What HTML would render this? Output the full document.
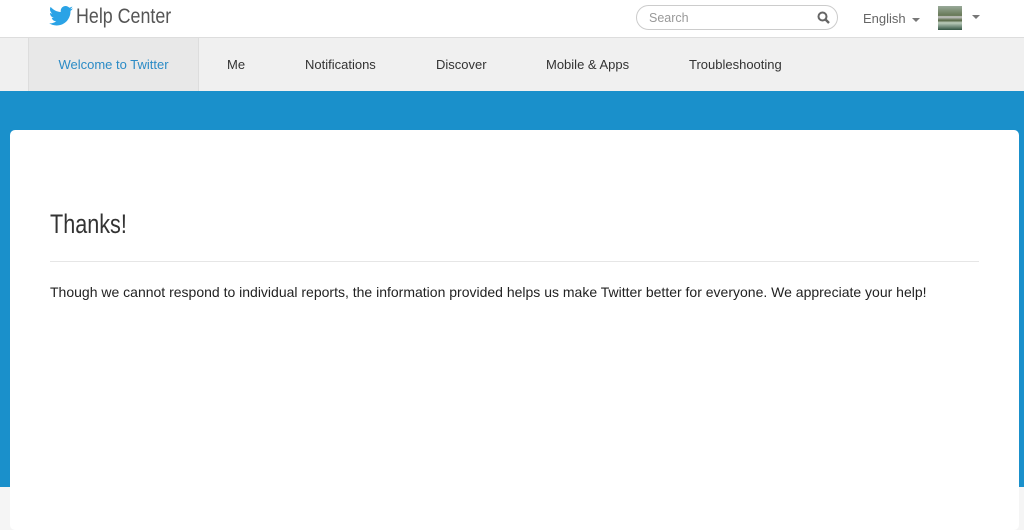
<!DOCTYPE html>
<html><head><meta charset="utf-8"><style>
*{margin:0;padding:0;box-sizing:border-box}
body{width:1024px;height:521px;overflow:hidden;background:#f5f5f5;font-family:"Liberation Sans",sans-serif;position:relative}
.hdr{position:absolute;left:0;top:0;width:1024px;height:38px;background:#fff;border-bottom:1px solid #ddd}
.logo{position:absolute;left:49px;top:6px}
.title{position:absolute;left:76px;top:5px;font-size:21px;color:#555;transform:scaleX(0.85);transform-origin:left}
.search{position:absolute;left:636px;top:5px;width:202px;height:25px;border:1px solid #ccc;border-radius:13px;background:#fff}
.search span{position:absolute;left:12px;top:5px;font-size:12.5px;color:#999}
.search svg{position:absolute;right:7px;top:5px}
.lang{position:absolute;left:863px;top:11px;font-size:13px;color:#666}
.caret{display:inline-block;border-left:4px solid transparent;border-right:4px solid transparent;border-top:4px solid #777;vertical-align:middle;margin-left:6px}
.av{position:absolute;left:938px;top:6px;width:24px;height:24px;background:linear-gradient(#9a9 0,#675 40%,#ccc 45%,#564 60%,#bcb 70%,#354 100%)}
.av2{position:absolute;left:966px;top:15px}
.nav{position:absolute;left:0;top:38px;width:1024px;height:53px;background:#f0f0f0}
.nav div{position:absolute;top:0;height:53px;line-height:53px;font-size:13px;color:#333}
.act{left:28px;width:171px;background:#e8e8e8;border-left:1px solid #ddd;border-right:1px solid #ddd;color:#2b8bc6!important;text-align:center}
.blue{position:absolute;left:0;top:91px;width:1024px;height:396px;background:#1a90cb}
.card{position:absolute;left:10px;top:130px;width:1009px;height:400px;background:#fff;border-radius:5px}
h1{position:absolute;left:50px;top:209px;font-size:27px;font-weight:normal;color:#333;transform:scaleX(0.8);transform-origin:left}
.hr{position:absolute;left:50px;top:261px;width:929px;height:1px;background:#e6e6e6}
p{position:absolute;left:50px;top:284px;font-size:14px;color:#222;white-space:nowrap}
</style></head><body>
<div class="hdr">
<svg class="logo" width="24" height="20" viewBox="0 0 24 20"><path fill="#2aa3e6" d="M24 2.4c-.9.4-1.8.6-2.8.8 1-.6 1.8-1.6 2.2-2.7-1 .6-2 1-3.1 1.2C19.3.7 18 0 16.6 0c-2.7 0-4.9 2.2-4.9 4.9 0 .4 0 .8.1 1.1C7.7 5.8 4.1 3.9 1.7.9c-.4.7-.7 1.600-.7 2.5 0 1.7.9 3.2 2.2 4.1-.8 0-1.6-.2-2.2-.6v.1c0 2.4 1.7 4.4 3.9 4.8-.4.1-.8.2-1.3.2-.3 0-.6 0-.9-.1.6 2 2.4 3.4 4.6 3.4-1.7 1.3-3.8 2.1-6.1 2.1-.4 0-.8 0-1.2-.1 2.2 1.4 4.8 2.2 7.5 2.2 9.1 0 14-7.5 14-14v-.6c1-.7 1.8-1.6 2.5-2.5z"/></svg>
<div class="title">Help Center</div>
<div class="search"><span>Search</span><svg width="13" height="13" viewBox="0 0 13 13"><circle cx="5.5" cy="5.5" r="4" fill="none" stroke="#666" stroke-width="2"/><path d="M8.5 8.5l3.5 3.5" stroke="#666" stroke-width="2.4"/></svg></div>
<div class="lang">English<span class="caret"></span></div>
<div class="av"></div><span class="av2 caret"></span>
</div>
<div class="nav">
<div class="act">Welcome to Twitter</div>
<div style="left:227px">Me</div>
<div style="left:305px">Notifications</div>
<div style="left:436px">Discover</div>
<div style="left:546px">Mobile &amp; Apps</div>
<div style="left:689px">Troubleshooting</div>
</div>
<div class="blue"></div>
<div class="card"></div>
<h1>Thanks!</h1>
<div class="hr"></div>
<p>Though we cannot respond to individual reports, the information provided helps us make Twitter better for everyone. We appreciate your help!</p>
</body></html>
